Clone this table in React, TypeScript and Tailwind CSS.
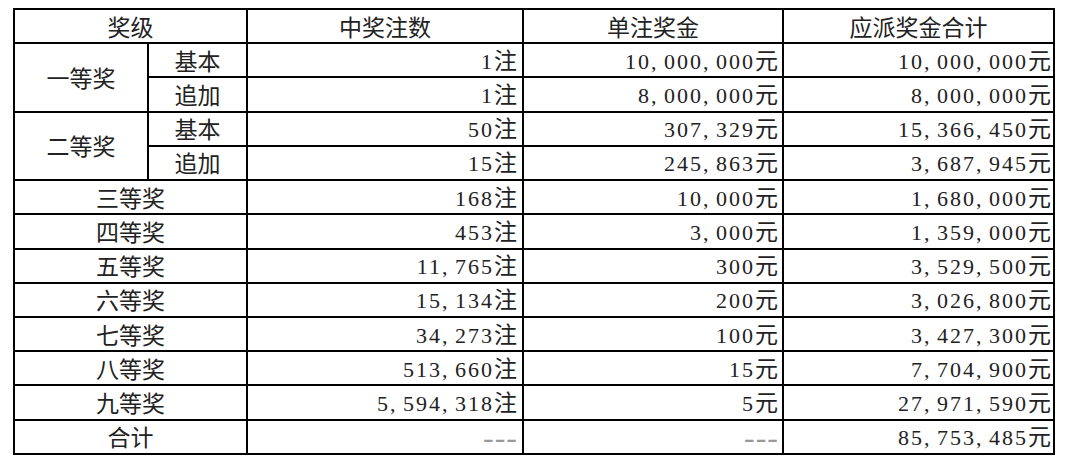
import React from "react";

type Row = {
  level: string;
  sub?: string;
  count: string;
  unit: string;
  total: string;
};

const rows: Row[] = [
  { level: "一等奖", sub: "基本", count: "1注", unit: "10,000,000元", total: "10,000,000元" },
  { level: "一等奖", sub: "追加", count: "1注", unit: "8,000,000元", total: "8,000,000元" },
  { level: "二等奖", sub: "基本", count: "50注", unit: "307,329元", total: "15,366,450元" },
  { level: "二等奖", sub: "追加", count: "15注", unit: "245,863元", total: "3,687,945元" },
  { level: "三等奖", count: "168注", unit: "10,000元", total: "1,680,000元" },
  { level: "四等奖", count: "453注", unit: "3,000元", total: "1,359,000元" },
  { level: "五等奖", count: "11,765注", unit: "300元", total: "3,529,500元" },
  { level: "六等奖", count: "15,134注", unit: "200元", total: "3,026,800元" },
  { level: "七等奖", count: "34,273注", unit: "100元", total: "3,427,300元" },
  { level: "八等奖", count: "513,660注", unit: "15元", total: "7,704,900元" },
  { level: "九等奖", count: "5,594,318注", unit: "5元", total: "27,971,590元" },
];

// serif digits on a 13px pitch; the comma takes a whole digit slot
function Num({ text }: { text: string }) {
  const groups = text.slice(0, -1).split(",");
  const unit = text.slice(-1);
  return (
    <>
      <span className="font-['Liberation_Serif',serif] text-[22px] tracking-[2px]">
        {groups.map((g, i) => (
          <React.Fragment key={i}>
            {i > 0 && <span className="inline-block w-[13px] text-left">,</span>}
            {g}
          </React.Fragment>
        ))}
      </span>
      <span>{unit}</span>
    </>
  );
}

const cell = "border-2 border-black p-0 leading-none";
const dash =
  "inline-block align-middle font-['Liberation_Serif',serif] text-[32px] leading-none tracking-[1px] text-[#999]";

export default function App() {
  return (
    <div className="h-[462px] w-[1080px] bg-white pl-[13px] pt-[8px]">
      <table
        className="h-[447px] w-[1042px] table-fixed border-collapse text-[23px] text-[#222]"
        style={{ fontFamily: '"Noto Sans CJK SC", "Liberation Serif", sans-serif' }}
      >
        <colgroup>
          <col className="w-[134px]" />
          <col className="w-[99px]" />
          <col className="w-[276px]" />
          <col className="w-[260px]" />
          <col className="w-[271px]" />
        </colgroup>
        <tbody>
          <tr className="h-[34px]">
            <td colSpan={2} className={`${cell} text-center`}>奖级</td>
            <td className={`${cell} text-center`}>中奖注数</td>
            <td className={`${cell} text-center`}>单注奖金</td>
            <td className={`${cell} text-center`}>应派奖金合计</td>
          </tr>
          {rows.map((r, i) => (
            <tr key={i} className="h-[34px]">
              {r.sub ? (
                <>
                  {r.sub === "基本" && (
                    <td rowSpan={2} className={`${cell} text-center`}>
                      {r.level}
                    </td>
                  )}
                  <td className={`${cell} text-center`}>{r.sub}</td>
                </>
              ) : (
                <td colSpan={2} className={`${cell} text-center`}>
                  {r.level}
                </td>
              )}
              <td className={`${cell} pr-[5px] text-right`}>
                <Num text={r.count} />
              </td>
              <td className={`${cell} pr-[4px] text-right`}>
                <Num text={r.unit} />
              </td>
              <td className={`${cell} pr-[2px] text-right`}>
                <Num text={r.total} />
              </td>
            </tr>
          ))}
          <tr className="h-[34px]">
            <td colSpan={2} className={`${cell} text-center`}>合计</td>
            <td className={`${cell} pr-[4px] text-right`}>
              <span className={dash}>---</span>
            </td>
            <td className={`${cell} pr-[3px] text-right`}>
              <span className={dash}>---</span>
            </td>
            <td className={`${cell} pr-[2px] text-right`}>
              <Num text="85,753,485元" />
            </td>
          </tr>
        </tbody>
      </table>
    </div>
  );
}
